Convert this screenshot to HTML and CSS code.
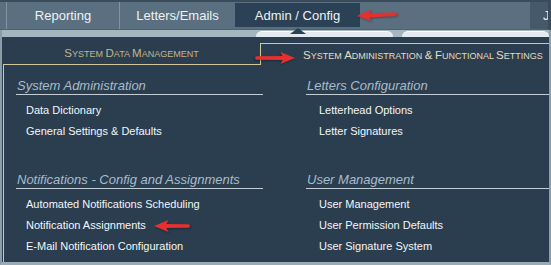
FILE: index.html
```html
<!DOCTYPE html>
<html lang="en">
<head>
<meta charset="utf-8">
<title>Admin / Config</title>
<link rel="stylesheet" href="styles.css">
</head>
<body>
<div class="app">
  <nav class="topbar">
    <div class="tab tab-reporting">Reporting</div>
    <div class="tab tab-letters">Letters/Emails</div>
    <div class="tab tab-admin is-active">Admin / Config</div>
    <div class="topbar-fill"></div>
    <div class="tab-user">J</div>
  </nav>

  <div class="window">
    <div class="strip">
      <span class="cap cap-a"></span>
      <span class="cap cap-b"></span>
    </div>
    <div class="subtabs">
      <div class="subtab"><span class="big">S</span>ystem <span class="big">D</span>ata <span class="big">M</span>anagement</div>
      <div class="subtab is-active"><span class="big">S</span>ystem <span class="big">A</span>dministration <span class="big">&amp;</span> <span class="big">F</span>unctional <span class="big">S</span>ettings</div>
    </div>

    <main class="panel">
      <section class="section">
        <h2 class="section-title">System Administration</h2>
        <ul class="links">
          <li>Data Dictionary</li>
          <li>General Settings &amp; Defaults</li>
        </ul>
      </section>
      <section class="section section--right">
        <h2 class="section-title">Letters Configuration</h2>
        <ul class="links">
          <li>Letterhead Options</li>
          <li>Letter Signatures</li>
        </ul>
      </section>
      <section class="section">
        <h2 class="section-title">Notifications - Config and Assignments</h2>
        <ul class="links">
          <li>Automated Notifications Scheduling</li>
          <li>Notification Assignments</li>
          <li>E-Mail Notification Configuration</li>
        </ul>
      </section>
      <section class="section section--right">
        <h2 class="section-title">User Management</h2>
        <ul class="links">
          <li>User Management</li>
          <li>User Permission Defaults</li>
          <li>User Signature System</li>
        </ul>
      </section>
    </main>
  </div>

  <svg class="arrow arrow-admin" viewBox="0 0 40 12" aria-hidden="true">
    <path d="M0 6 L14.5 0 L12.4 4.1 L38.3 4.3 A1.7 1.7 0 0 1 38.3 7.7 L12.4 7.9 L14.5 12 Z"/>
  </svg>
  <svg class="arrow arrow-subtab" viewBox="0 0 40 12" aria-hidden="true">
    <path d="M0 6 L14.5 0 L12.4 4.1 L38.3 4.3 A1.7 1.7 0 0 1 38.3 7.7 L12.4 7.9 L14.5 12 Z"/>
  </svg>
  <svg class="arrow arrow-notif" viewBox="0 0 36 12" aria-hidden="true">
    <path d="M0 6 L14.5 0 L12.4 4.1 L34.3 4.3 A1.7 1.7 0 0 1 34.3 7.7 L12.4 7.9 L14.5 12 Z"/>
  </svg>
</div>
</body>
</html>
```

FILE: styles.css
```css
* { box-sizing: border-box; }

html, body {
  margin: 0;
  padding: 0;
}

body {
  width: 551px;
  height: 265px;
  overflow: hidden;
  background: #2a3e50;
  font-family: "Liberation Sans", Arial, sans-serif;
}

.app {
  position: relative;
  width: 551px;
  height: 265px;
  display: flex;
  flex-direction: column;
}

/* ---------- top navigation ---------- */
.topbar {
  display: flex;
  height: 30px;
  flex: 0 0 30px;
  background: #5a7080;
  border-top: 2px solid #3a4c5b;
  border-bottom: 1px solid #4d6272;
  border-right: 3px solid #3a4c5b;
  padding-left: 6px;
}

.tab {
  display: flex;
  align-items: center;
  justify-content: center;
  color: #eef2f5;
  font-size: 13px;
  border-left: 1px solid #8196a4;
  white-space: nowrap;
}

.tab-reporting { width: 113px; }
.tab-letters { width: 116px; }

.tab-admin {
  position: relative;
  width: 125px;
  margin: 1px 0 2px;
  border-left: none;
  background: #2b4156;
}

.tab-admin::after {
  content: "";
  position: absolute;
  left: 55px;
  top: 100%;
  margin-top: 1px;
  width: 0;
  height: 0;
  border-left: 8px solid transparent;
  border-right: 8px solid transparent;
  border-bottom: 6px solid #2b4156;
  z-index: 2;
}

.topbar-fill { flex: 1; }

.tab-user {
  width: 18px;
  padding-left: 13px;
  background: #45596a;
  color: #eef2f5;
  font-size: 13px;
  display: flex;
  align-items: center;
  overflow: hidden;
}

/* ---------- window ---------- */
.window {
  flex: 1;
  display: flex;
  flex-direction: column;
  border-left: 2px solid #8d9da8;
  border-right: 2px solid #8d9da8;
  border-bottom: 3px solid #9aabb6;
  background: #2a3e50;
  overflow: hidden;
}

.strip {
  display: flex;
  align-items: flex-end;
  gap: 9px;
  height: 7px;
  flex: 0 0 7px;
  padding: 0 0 0 254px;
  background: #a4b6c0;
}

.cap {
  height: 6px;
  border-radius: 6px 6px 0 0;
  background: #e4eaee;
  border-top: 1px solid #ffffff;
}

.cap-a { width: 137px; }
.cap-b { flex: 1; }

.subtabs {
  display: flex;
  height: 28px;
  flex: 0 0 28px;
}

.subtab {
  font-size: 9px;
  line-height: 14px;
  text-transform: uppercase;
  white-space: nowrap;
  color: #c4b58c;
}

.subtab .big { font-size: 11.5px; }

.subtab:first-child {
  width: 257px;
  margin-left: 1px;
  padding-top: 9px;
  text-align: center;
  border-bottom: 1px solid #d4c79c;
}

.subtab.is-active {
  flex: 1;
  margin-top: 6px;
  padding: 4px 0 0 42px;
  border-top: 1px solid #d4c79c;
  border-left: 1px solid #d4c79c;
  color: #e6dcbf;
  overflow: hidden;
}

/* ---------- panel ---------- */
.panel {
  flex: 1;
  margin-left: 1px;
  border-left: 1px solid #d4c79c;
  padding: 13px 0 0 12px;
  display: grid;
  grid-template-columns: 247px 247px;
  column-gap: 43px;
  row-gap: 30px;
  align-content: start;
  overflow: hidden;
}

.section-title {
  margin: 0;
  padding-left: 1px;
  font-size: 13px;
  line-height: 16px;
  font-style: italic;
  font-weight: normal;
  color: #a8bccb;
  border-bottom: 1px solid #c3ced6;
  white-space: nowrap;
}

.links {
  list-style: none;
  margin: 5px 0 0;
  padding: 0 0 0 10px;
}

.section--right .links { padding-left: 13px; }

.links li {
  font-size: 11px;
  line-height: 21px;
  color: #f4f6f8;
  white-space: nowrap;
}

/* ---------- annotation arrows ---------- */
.arrow {
  position: absolute;
  height: 12px;
  fill: #e5302f;
  filter: drop-shadow(1px 1px 1px rgba(0, 0, 0, 0.35));
  z-index: 5;
}

.arrow-admin {
  left: 357px;
  top: 9px;
  width: 40px;
  transform: rotate(-2.5deg);
}

.arrow-subtab {
  left: 255px;
  top: 52px;
  width: 40px;
  transform: scaleX(-1);
}

.arrow-notif {
  left: 154px;
  top: 220px;
  width: 36px;
}
```
